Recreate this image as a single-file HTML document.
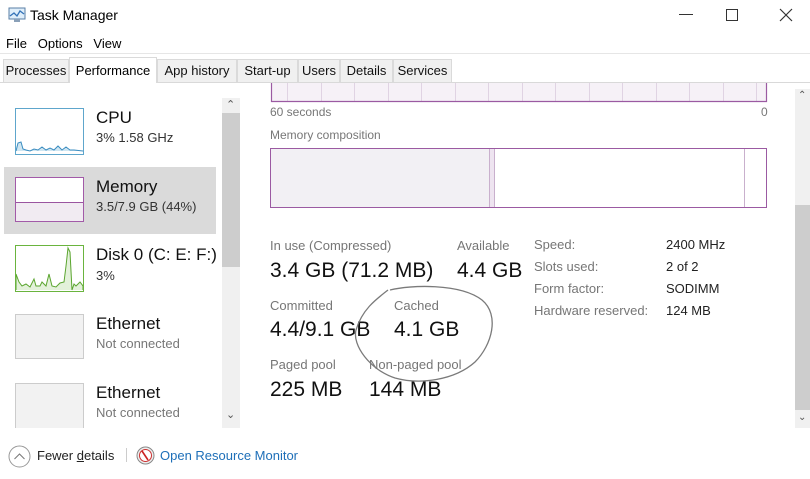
<!DOCTYPE html>
<html><head><meta charset="utf-8"><style>
*{margin:0;padding:0;box-sizing:border-box}
body{width:810px;height:479px;background:#fff;font-family:"Liberation Sans",sans-serif;color:#000;position:relative;overflow:hidden}
.a{position:absolute;white-space:nowrap}
.tab{position:absolute;top:59px;height:23px;background:#f0f0f0;border:1px solid #dadada;border-bottom:none;font-size:13px;line-height:22px;text-align:center;color:#111}
.thumb{position:absolute;left:15px;width:69px;border:1px solid #ccc;background:#f2f2f2}
.big{font-size:17px;color:#111}
.sm{font-size:13px;color:#333}
.gr{font-size:13px;color:#777}
.lbl{font-size:13px;color:#767676}
.val{font-size:21px;color:#111}
</style></head><body>
<svg class="a" style="left:8px;top:7px" width="18" height="16" viewBox="0 0 18 16"><rect x="1" y="1" width="16" height="11" fill="#dfeefa" stroke="#5a7fa6"/><polyline points="2,9 6,6 9,9 12,4 16,7" fill="none" stroke="#3473b8" stroke-width="1.3"/><rect x="6" y="12" width="6" height="3" fill="#8aa0b8"/></svg>
<div class="a" style="left:30px;top:7px;font-size:14px">Task Manager</div>
<div class="a" style="left:679px;top:14px;width:14px;height:1px;background:#333"></div>
<div class="a" style="left:726px;top:9px;width:12px;height:12px;border:1px solid #333"></div>
<svg class="a" style="left:779px;top:8px" width="14" height="14"><path d="M1 1L13 13M13 1L1 13" stroke="#333" stroke-width="1.2"/></svg>
<div class="a" style="left:6px;top:36px;font-size:13px">File&nbsp;&nbsp; Options&nbsp;&nbsp; View</div>
<div class="a" style="left:0;top:53px;width:810px;height:1px;background:#e6e6e6"></div>
<div class="a" style="left:0;top:82px;width:810px;height:1px;background:#d9d9d9"></div>
<div class="tab" style="left:3px;width:66px">Processes</div>
<div class="tab" style="left:69px;width:88px;top:57px;height:26px;background:#fff;line-height:25px;color:#000">Performance</div>
<div class="tab" style="left:157px;width:80px">App history</div>
<div class="tab" style="left:237px;width:61px">Start-up</div>
<div class="tab" style="left:298px;width:42px">Users</div>
<div class="tab" style="left:340px;width:53px">Details</div>
<div class="tab" style="left:393px;width:59px">Services</div>
<div class="a" style="left:4px;top:167px;width:212px;height:67px;background:#dadada"></div>
<div class="thumb" style="top:108px;height:47px;border-color:#5ea6cc;background:#fff">
<svg width="67" height="45" style="position:absolute;left:0;top:0"><polyline points="0,42 2,34 5,33 7,40 10,41 14,42 18,40 22,41 26,38 30,41 34,39 38,41 42,37 46,41 50,38 54,41 58,41 67,42" fill="#cfe6f2" stroke="#3a8cc0"/></svg></div>
<div class="a big" style="left:96px;top:108px">CPU</div>
<div class="a sm" style="left:96px;top:130px">3% 1.58 GHz</div>
<div class="thumb" style="top:177px;height:45px;border-color:#a25aa8;background:#fff">
<div style="position:absolute;left:0;top:24px;width:67px;height:19px;background:#f1ebf2;border-top:1px solid #9a55a0"></div></div>
<div class="a big" style="left:96px;top:177px">Memory</div>
<div class="a sm" style="left:96px;top:199px">3.5/7.9 GB (44%)</div>
<div class="thumb" style="top:245px;height:47px;border-color:#6ab43e;background:#fff">
<svg width="67" height="45" style="position:absolute;left:0;top:0"><polyline points="0,44 0,28 3,36 6,40 10,38 14,41 18,33 20,40 24,40 26,36 30,40 33,28 36,40 40,41 44,37 48,36 50,20 52,2 54,6 56,44 58,38 60,40 64,36 67,40 67,44" fill="#e3f1da" stroke="#5aa52e"/></svg></div>
<div class="a big" style="left:96px;top:245px">Disk 0 (C: E: F:)</div>
<div class="a sm" style="left:96px;top:268px">3%</div>
<div class="thumb" style="top:314px;height:45px"></div>
<div class="a big" style="left:96px;top:314px">Ethernet</div>
<div class="a gr" style="left:96px;top:336px">Not connected</div>
<div class="thumb" style="top:383px;height:45px;border-bottom:none"></div>
<div class="a big" style="left:96px;top:383px">Ethernet</div>
<div class="a gr" style="left:96px;top:405px">Not connected</div>
<div class="a" style="left:222px;top:98px;width:18px;height:330px;background:#f0f0f0"></div>
<div class="a" style="left:222px;top:113px;width:18px;height:154px;background:#cdcdcd"></div>
<div class="a" style="left:226px;top:98px;font-size:11px;color:#555">&#8963;</div>
<div class="a" style="left:226px;top:408px;font-size:11px;color:#555">&#8964;</div>
<svg class="a" style="left:270px;top:83px" width="498" height="20">
<rect x="1" y="0" width="496" height="18" fill="#f6f1f7"/>
<g stroke="#e0d3e3"><path d="M17.5 0V18M51.5 0V18M84.5 0V18M118.5 0V18M151.5 0V18M185.5 0V18M218.5 0V18M252.5 0V18M285.5 0V18M319.5 0V18M352.5 0V18M386.5 0V18M419.5 0V18M453.5 0V18M486.5 0V18"/></g>
<path d="M1.5 0V18.5H496.5V0" fill="none" stroke="#9b5aa2" stroke-width="1.2"/></svg>
<div class="a gr" style="left:270px;top:105px;font-size:12px">60 seconds</div>
<div class="a gr" style="left:761px;top:105px;font-size:12px">0</div>
<div class="a gr" style="left:270px;top:128px;font-size:12px">Memory composition</div>
<div class="a" style="left:270px;top:148px;width:497px;height:60px;border:1px solid #9b5aa2;background:#fff">
<div style="position:absolute;left:0;top:0;width:218px;height:58px;background:#f2f0f4"></div>
<div style="position:absolute;left:218px;top:0;width:6px;height:58px;background:#eee4f0;border-left:1px solid #c9b0cd;border-right:1px solid #c9b0cd"></div>
<div style="position:absolute;left:473px;top:0;width:1px;height:58px;background:#c9b0cd"></div>
</div>
<div class="a lbl" style="left:270px;top:238px">In use (Compressed)</div>
<div class="a val" style="left:270px;top:259px">3.4 GB (71.2 MB)</div>
<div class="a lbl" style="left:457px;top:238px">Available</div>
<div class="a val" style="left:457px;top:259px">4.4 GB</div>
<div class="a lbl" style="left:270px;top:298px">Committed</div>
<div class="a val" style="left:270px;top:318px">4.4/9.1 GB</div>
<div class="a lbl" style="left:394px;top:298px">Cached</div>
<div class="a val" style="left:394px;top:318px">4.1 GB</div>
<div class="a lbl" style="left:270px;top:357px">Paged pool</div>
<div class="a val" style="left:270px;top:378px">225 MB</div>
<div class="a lbl" style="left:369px;top:357px">Non-paged pool</div>
<div class="a val" style="left:369px;top:378px">144 MB</div>
<div class="a lbl" style="left:534px;top:234px;line-height:22px">Speed:<br>Slots used:<br>Form factor:<br>Hardware reserved:</div>
<div class="a" style="left:666px;top:234px;line-height:22px;font-size:13px;color:#222">2400 MHz<br>2 of 2<br>SODIMM<br>124 MB</div>
<svg class="a" style="left:0;top:0" width="810" height="479"><path d="M390 290C410 285 460 283 482 300C500 315 492 345 475 362C455 380 420 385 395 378C370 370 352 345 356 330C362 310 375 300 388 290" fill="none" stroke="#7a7a7a" stroke-width="1.3"/></svg>
<div class="a" style="left:795px;top:89px;width:15px;height:339px;background:#f0f0f0"></div>
<div class="a" style="left:795px;top:205px;width:15px;height:205px;background:#cdcdcd"></div>
<div class="a" style="left:798px;top:90px;font-size:10px;color:#555">&#8963;</div>
<div class="a" style="left:798px;top:412px;font-size:10px;color:#555">&#8964;</div>
<svg class="a" style="left:8px;top:445px" width="23" height="23"><circle cx="11.5" cy="11.5" r="10.5" fill="none" stroke="#999"/><path d="M6.5 14L11.5 9L16.5 14" fill="none" stroke="#777"/></svg>
<div class="a" style="left:37px;top:448px;font-size:13px;color:#222">Fewer <u>d</u>etails</div>
<div class="a" style="left:126px;top:448px;width:1px;height:14px;background:#ccc"></div>
<svg class="a" style="left:136px;top:446px" width="19" height="19"><circle cx="9.5" cy="9.5" r="8.5" fill="#eee" stroke="#888"/><circle cx="9.5" cy="9.5" r="6" fill="#fff" stroke="#c33"/><path d="M6 5L12 14" stroke="#c22" stroke-width="1.6"/></svg>
<div class="a" style="left:160px;top:448px;font-size:13px;color:#1e6fb8">Open Resource Monitor</div>
</body></html>
